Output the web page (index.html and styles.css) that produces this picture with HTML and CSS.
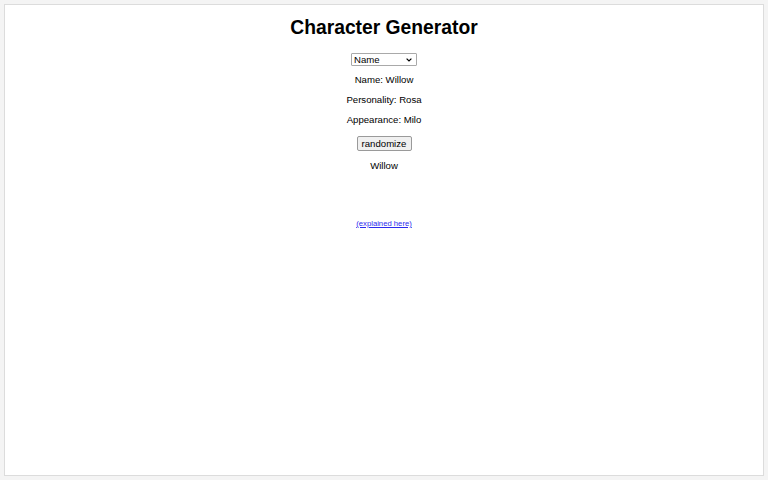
FILE: index.html
```html
<!DOCTYPE html>
<html>
<head>
<meta charset="utf-8">
<title>Character Generator</title>
<link rel="stylesheet" href="styles.css">
</head>
<body>
<div class="frame">
  <h1 class="title">Character Generator</h1>
  <select class="picker">
    <option>Name</option>
    <option>Personality</option>
    <option>Appearance</option>
  </select>
  <p class="line line-first">Name: Willow</p>
  <p class="line">Personality: Rosa</p>
  <p class="line">Appearance: Milo</p>
  <button class="roll">randomize</button>
  <p class="result">Willow</p>
  <a class="note" href="#">(explained here)</a>
</div>
</body>
</html>
```
FILE: styles.css
```css
html, body {
  margin: 0;
  padding: 0;
  background: #f4f4f4;
}

body {
  font-family: "Liberation Sans", Arial, sans-serif;
  color: #000;
  padding: 4px;
}

.frame {
  box-sizing: border-box;
  height: 472px;
  background: #fff;
  border: 1px solid #dcdcdc;
  display: flex;
  flex-direction: column;
  align-items: center;
}

.title {
  font-size: 19.3px;
  line-height: 22px;
  font-weight: bold;
  margin: 12px 0 0;
}

/* compact dropdown with a small chevron on the right */
.picker {
  -webkit-appearance: none;
  appearance: none;
  box-sizing: border-box;
  margin-top: 14px;
  width: 66px;
  height: 13px;
  font-family: "Liberation Sans", Arial, sans-serif;
  font-size: 9.6px;
  line-height: 11px;
  padding: 0 0 0 2px;
  color: #000;
  border: 1px solid #a9a9a9;
  border-radius: 1px;
  background-color: #fff;
  background-image: url("data:image/svg+xml;utf8,<svg xmlns='http://www.w3.org/2000/svg' width='6' height='4' viewBox='0 0 6 4'><path d='M0.6 0.6 L3 3 L5.4 0.6' fill='none' stroke='black' stroke-width='1.2'/></svg>");
  background-repeat: no-repeat;
  background-position: right 4px center;
  background-size: 6px 4px;
}

.line {
  font-size: 9.6px;
  line-height: 12px;
  margin: 8px 0 0;
}

.line-first {
  margin-top: 8px;
}

.roll {
  box-sizing: border-box;
  margin-top: 10px;
  width: 55px;
  height: 15px;
  padding: 0;
  font-family: "Liberation Sans", Arial, sans-serif;
  font-size: 9.6px;
  line-height: 12px;
  background: #f0f0f0;
  border: 1px solid #9a9a9a;
  border-radius: 2px;
  color: #000;
}

.result {
  font-size: 9.6px;
  line-height: 12px;
  margin: 9px 0 0;
}

.note {
  margin-top: 47px;
  font-size: 7.7px;
  line-height: 9px;
  color: #2a2aee;
}
```
